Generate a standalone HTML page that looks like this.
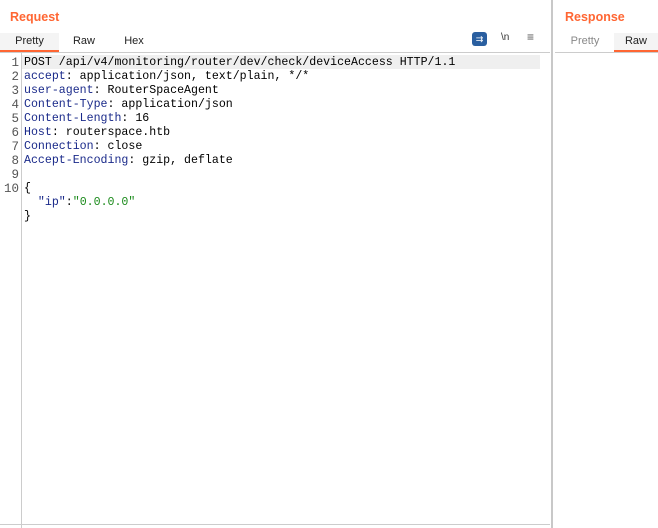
<!DOCTYPE html><html><head><style>
body{margin:0;width:658px;height:528px;background:#fff;position:relative;overflow:hidden;font-family:"Liberation Sans",sans-serif}
.t{position:absolute;color:#ff6633;font-weight:bold;font-size:12.5px}
.tab{position:absolute;top:33px;height:19px;font-size:11px;color:#222;text-align:center;line-height:17px}
.sel{background:#f4f4f4;border-bottom:2px solid #ff6633;height:17px}
.code{position:absolute;left:0;top:56px;font-family:"Liberation Mono",monospace;font-size:11.6px;line-height:14px;white-space:pre}
.ln{position:absolute;left:0;top:0;width:19px;text-align:right;color:#555;font-size:12.5px}
.k{color:#1a2a8a}.s{color:#1a8a1a}
</style></head><body>
<div class="t" style="left:10px;top:10px">Request</div>
<div class="t" style="left:565px;top:10px">Response</div>
<div class="tab sel" style="left:0;width:59px">Pretty</div>
<div class="tab" style="left:59px;width:50px">Raw</div>
<div class="tab" style="left:109px;width:50px">Hex</div>
<div style="position:absolute;left:472px;top:32px;width:15px;height:14px;background:#2a5fa0;border-radius:3px;color:#fff;font-size:9px;text-align:center;line-height:14px">⇉</div>
<div style="position:absolute;left:501px;top:32px;font-size:10px;color:#333">\n</div>
<div style="position:absolute;left:527px;top:30px;font-size:12px;color:#555">≡</div>
<div style="position:absolute;left:0;top:52px;width:550px;height:1px;background:#ccc"></div>
<div style="position:absolute;left:551px;top:0;width:2px;height:528px;background:#c8c8c8"></div>
<div style="position:absolute;left:555px;top:52px;width:103px;height:1px;background:#ccc"></div>
<div class="tab" style="left:560px;width:50px;color:#888">Pretty</div>
<div class="tab sel" style="left:614px;width:44px">Raw</div>
<div style="position:absolute;left:21px;top:53px;width:1px;height:475px;background:#ccc"></div>
<div style="position:absolute;left:22px;top:55px;width:518px;height:14px;background:#efefef"></div>
<div style="position:absolute;left:0;top:524px;width:550px;height:1px;background:#ccc"></div>
<div class="code"><div class="ln">1
2
3
4
5
6
7
8
9
10</div><div style="position:absolute;left:24px;top:0">POST /api/v4/monitoring/router/dev/check/deviceAccess HTTP/1.1
<span class="k">accept</span>: application/json, text/plain, */*
<span class="k">user-agent</span>: RouterSpaceAgent
<span class="k">Content-Type</span>: application/json
<span class="k">Content-Length</span>: 16
<span class="k">Host</span>: routerspace.htb
<span class="k">Connection</span>: close
<span class="k">Accept-Encoding</span>: gzip, deflate

{
  <span class="k">"ip"</span>:<span class="s">"0.0.0.0"</span>
}</div></div>
</body></html>
